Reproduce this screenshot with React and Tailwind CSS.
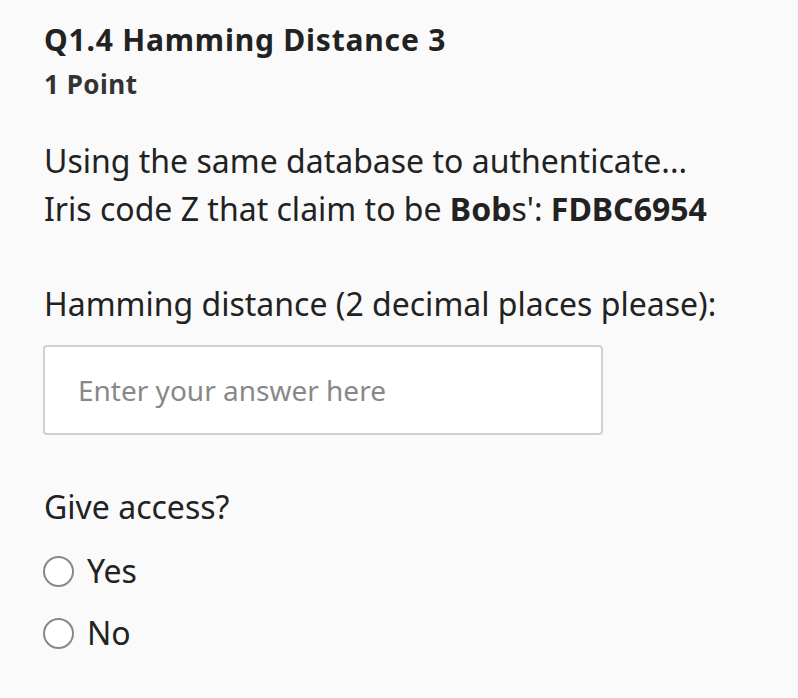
export default function App() {
  return (
    <div className="w-[798px] h-[698px] bg-[#fafafa] text-[#222222] pl-[44px] pt-[20px]" style={{ fontFamily: '"Noto Sans", sans-serif' }}>
      <div className="text-[30px] font-bold leading-[40px] tracking-[0.8px]">Q1.4 Hamming Distance 3</div>
      <div className="mt-[6px] text-[26px] font-bold leading-[36px] tracking-[0.5px] text-[#333333]">1 Point</div>
      <div className="mt-[35px] text-[32px] leading-[48px]">
        <div>Using the same database to authenticate...</div>
        <div>Iris code Z that claim to be <b>Bob</b>s': <b>FDBC6954</b></div>
      </div>
      <div className="mt-[47px] text-[32px] leading-[48px]">Hamming distance (2 decimal places please):</div>
      <input
        className="mt-[17px] -ml-[1px] block w-[560px] h-[90px] bg-white border-2 border-[#d0d0d0] rounded-[4px] px-[33px] text-[28px] text-[#222] placeholder:text-[#888888] outline-none"
        style={{ fontFamily: '"Noto Sans", sans-serif' }}
        placeholder="Enter your answer here"
      />
      <div className="mt-[48px] text-[32px] leading-[48px]">Give access?</div>
      <div className="mt-[16px] flex flex-col gap-[14px]">
        {["Yes", "No"].map((o) => (
          <label key={o} className="flex items-center gap-[13px] text-[32px] leading-[48px] -ml-[1px]">
            <span className="w-[31px] h-[31px] rounded-full border-2 border-[#888888] bg-white shrink-0" />
            <span>{o}</span>
          </label>
        ))}
      </div>
    </div>
  );
}
